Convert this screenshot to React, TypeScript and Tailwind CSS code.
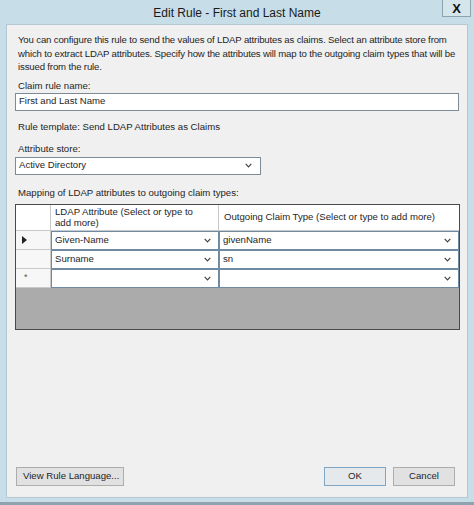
import React from "react";

const Chevron: React.FC = () => (
  <svg width="7" height="5" viewBox="0 0 7 5" className="shrink-0">
    <polyline points="0.7,0.8 3.5,3.8 6.3,0.8" fill="none" stroke="#444" strokeWidth="1.2" />
  </svg>
);

const Combo: React.FC<{ value: string; className?: string }> = ({ value, className }) => (
  <div className={`flex items-center bg-white border border-[#6f8aa3] pl-[3px] pr-[7px] ${className ?? ""}`}>
    <span className="flex-1 truncate">{value}</span>
    <Chevron />
  </div>
);

const rows = [
  { marker: "arrow", ldap: "Given-Name", claim: "givenName" },
  { marker: "", ldap: "Surname", claim: "sn" },
  { marker: "star", ldap: "", claim: "" },
];

const App: React.FC = () => {
  return (
    <div
      className="w-[474px] h-[505px] bg-[#c7dde7] flex flex-col text-[9.6px] text-[#1e1e1e] border-b-[3px] border-[#8ea3ad] whitespace-nowrap"
      style={{ fontFamily: '"Liberation Sans", Arial, sans-serif' }}
    >
      {/* title bar */}
      <div className="relative h-[24px] shrink-0 flex items-center justify-center">
        <span className="text-[12px] text-[#1a1a1a] pt-[2px]">Edit Rule - First and Last Name</span>
        <div className="absolute right-[3px] top-0 w-[29px] h-[17px] border border-t-0 border-[#8ea3ad] bg-[#d5e5ec] flex items-center justify-center">
          <span className="text-[13px] font-bold text-[#111] leading-none">X</span>
        </div>
      </div>

      {/* client area */}
      <div className="mx-[6px] mb-[4px] flex-1 bg-[#f0f0f0] border border-[#b5c8d1] px-[8px] pt-[8px] pb-[11px] flex flex-col">
        <p className="pl-[3px] leading-[13.5px] tracking-[-0.15px]">
          You can configure this rule to send the values of LDAP attributes as claims. Select an attribute store from
          <br />
          which to extract LDAP attributes. Specify how the attributes will map to the outgoing claim types that will be
          <br />
          issued from the rule.
        </p>

        <div className="mt-[5px] pl-[3px] leading-[14px]">Claim rule name:</div>
        <div className="h-[18px] bg-white border border-[#7f8b94] flex items-center pl-[3px]">
          First and Last Name
        </div>

        <div className="mt-[9px] pl-[3px] leading-[14px]">Rule template: Send LDAP Attributes as Claims</div>

        <div className="mt-[8px] pl-[3px] leading-[14px]">Attribute store:</div>
        <div className="mt-[1px] w-[246px] h-[18px] bg-white border border-[#7f8b94] flex items-center pl-[3px] pr-[8px]">
          <span className="flex-1">Active Directory</span>
          <Chevron />
        </div>

        <div className="mt-[11px] pl-[3px] leading-[14px]">Mapping of LDAP attributes to outgoing claim types:</div>

        {/* data grid */}
        <div className="mt-[4px] w-[445px] h-[126px] border border-[#4a4a4a] bg-[#ababab] flex flex-col">
          <div className="h-[26px] bg-white flex border-b border-[#c9c9c9]">
            <div className="w-[35px] border-r border-[#c9c9c9]" />
            <div className="w-[168px] border-r border-[#c9c9c9] pl-[4px] leading-[11px] flex items-center">
              LDAP Attribute (Select or type to
              <br />
              add more)
            </div>
            <div className="flex-1 pl-[5px] flex items-center">Outgoing Claim Type (Select or type to add more)</div>
          </div>
          {rows.map((r, i) => (
            <div key={i} className="h-[19px] flex bg-white">
              <div className="w-[35px] bg-[#f7f7f7] border-r border-b border-[#c9c9c9] flex items-center pl-[6px]">
                {r.marker === "arrow" && (
                  <svg width="5" height="8" viewBox="0 0 5 8">
                    <polygon points="0,0 5,4 0,8" fill="#222" />
                  </svg>
                )}
                {r.marker === "star" && <span className="text-[#555] text-[9px] leading-none pl-[2px]">*</span>}
              </div>
              <Combo value={r.ldap} className="w-[168px] h-[19px]" />
              <Combo value={r.claim} className="flex-1 h-[19px]" />
            </div>
          ))}
        </div>

        <div className="flex-1" />

        {/* buttons */}
        <div className="flex items-center px-[1px]">
          <div className="w-[108px] h-[19px] bg-[#e1e1e1] border border-[#adadad] flex items-center pl-[6px]">
            View Rule Language...
          </div>
          <div className="flex-1" />
          <div className="w-[62px] h-[19px] bg-[#e5e9ec] border border-[#7fa6c4] flex items-center justify-center">
            OK
          </div>
          <div className="w-[62px] h-[19px] ml-[7px] mr-[3px] bg-[#e1e1e1] border border-[#adadad] flex items-center justify-center">
            Cancel
          </div>
        </div>
      </div>
    </div>
  );
};

export default App;
